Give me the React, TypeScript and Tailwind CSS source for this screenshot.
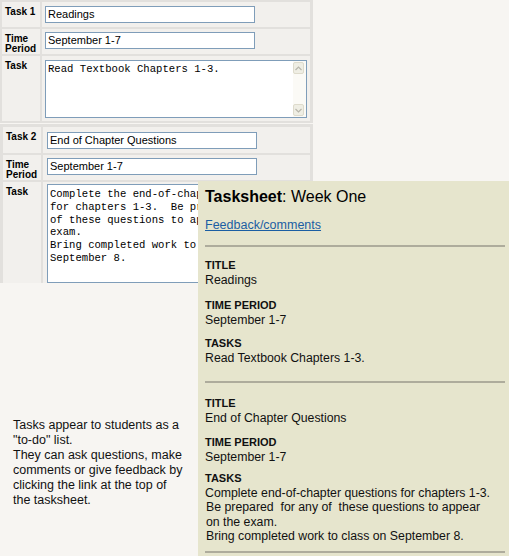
import React from 'react';

const FONT = { fontFamily: '"Liberation Sans", Arial, sans-serif' };

const Field = ({ value }: { value: string }) => (
  <div className="h-[17px] w-[210px] border border-[#7f9db9] bg-white px-[2px] text-[11px] leading-[15px] text-black whitespace-nowrap">
    {value}
  </div>
);

const Label = ({ lines }: { lines: string[] }) => (
  <div className="bg-[#f2f0ed] pl-[3px] pt-[5px] text-[10px] font-bold leading-[10px] text-black">
    {lines.map((l) => (
      <div key={l}>{l}</div>
    ))}
  </div>
);

const Chevron = ({ up }: { up?: boolean }) => (
  <div className="flex h-[12px] w-[11px] items-center justify-center rounded-[2px] border border-[#dedbcc] bg-[#efeee4]">
    <svg width="7" height="5" viewBox="0 0 7 5">
      <path d={up ? 'M0.5 4 L3.5 1 L6.5 4' : 'M0.5 1 L3.5 4 L6.5 1'} fill="none" stroke="#b8b6ab" strokeWidth="1.2" />
    </svg>
  </div>
);

export default function App() {
  return (
    <div className="relative flex h-[556px] w-[509px] flex-col overflow-hidden bg-[#f7f5f2]" style={FONT}>
      {/* Task 1 table */}
      <div className="grid w-[313px] grid-cols-[38px_1fr] gap-[2px] bg-[#e2e0dd] p-[2px] pr-[3px]">
        <Label lines={['Task 1']} />
        <div className="bg-[#f2f0ed] py-[4px] pl-[3px]">
          <Field value="Readings" />
        </div>
        <Label lines={['Time', 'Period']} />
        <div className="bg-[#f2f0ed] pb-[4px] pl-[3px] pt-[3px]">
          <Field value="September 1-7" />
        </div>
        <Label lines={['Task']} />
        <div className="bg-[#f2f0ed] pb-[3px] pl-[3px] pt-[4px]">
          <div className="flex h-[58px] w-[262px] border border-[#7f9db9] bg-white">
            <div className="flex-1 whitespace-pre pl-[2px] pt-[2px] font-['Liberation_Mono'] text-[10.6px] leading-[13px] text-black">
              Read Textbook Chapters 1-3.
            </div>
            <div className="flex w-[13px] flex-col justify-between bg-[#fbfaf6] py-[1px]">
              <Chevron up />
              <Chevron />
            </div>
          </div>
        </div>
      </div>

      {/* Task 2 table */}
      <div className="mt-[1px] grid h-[159px] w-[313px] grid-cols-[38px_1fr] grid-rows-[26px_25px_1fr] gap-[2px] overflow-hidden bg-[#e2e0dd] pl-[3px] pr-[3px] pt-[3px]">
        <Label lines={['Task 2']} />
        <div className="bg-[#f2f0ed] pl-[4px] pt-[5px]">
          <Field value="End of Chapter Questions" />
        </div>
        <Label lines={['Time', 'Period']} />
        <div className="bg-[#f2f0ed] pl-[4px] pt-[3px]">
          <Field value="September 1-7" />
        </div>
        <Label lines={['Task']} />
        <div className="bg-[#f2f0ed] pl-[4px] pt-[2px]">
          <div className="h-[99px] w-[262px] border border-[#7f9db9] bg-white pl-[2px] pt-[3px]">
            {/* only the part left of the overlay is visible */}
            <div className="w-[148px] overflow-hidden whitespace-pre font-['Liberation_Mono'] text-[10.6px] leading-[12.8px] text-black">
              {'Complete the end-of-chapter questions\nfor chapters 1-3.  Be prepared for any\nof these questions to appear on the\nexam.\nBring completed work to class on\nSeptember 8.'}
            </div>
          </div>
        </div>
      </div>

      {/* Note */}
      <div className="mt-[135px] pl-[13px] text-[12.5px] leading-[15px] text-[#111]">
        Tasks appear to students as a
        <br />
        "to-do" list.
        <br />
        They can ask questions, make
        <br />
        comments or give feedback by
        <br />
        clicking the link at the top of
        <br />
        the tasksheet.
      </div>

      {/* Tasksheet preview overlay */}
      <div className="absolute left-[198px] top-[181px] h-[375px] w-[311px] bg-[#e6e5cd] pl-[7px] pr-[4px] pt-[7px] text-[#111]">
        <div className="text-[16px] leading-[18px] text-black">
          <span className="font-bold">Tasksheet</span>: Week One
        </div>
        <a href="#" className="mt-[12px] block text-[12.5px] leading-[14px] text-[#1b5ea3] underline">
          Feedback/comments
        </a>
        <div className="mt-[13px] h-[2px] bg-[#aeac9c]" />

        <div className="mt-[10px] text-[11px] font-bold leading-[16px]">TITLE</div>
        <div className="text-[12.3px] leading-[15px]">Readings</div>
        <div className="mt-[9px] text-[11px] font-bold leading-[16px]">TIME PERIOD</div>
        <div className="text-[12.3px] leading-[15px]">September 1-7</div>
        <div className="mt-[7px] text-[11px] font-bold leading-[16px]">TASKS</div>
        <div className="text-[12.3px] leading-[15px]">Read Textbook Chapters 1-3.</div>
        <div className="mt-[15px] h-[2px] bg-[#aeac9c]" />

        <div className="mt-[12px] text-[11px] font-bold leading-[16px]">TITLE</div>
        <div className="text-[12.3px] leading-[15px]">End of Chapter Questions</div>
        <div className="mt-[8px] text-[11px] font-bold leading-[16px]">TIME PERIOD</div>
        <div className="text-[12.3px] leading-[15px]">September 1-7</div>
        <div className="mt-[5px] text-[11px] font-bold leading-[16px]">TASKS</div>
        <div className="text-[12.3px] leading-[14.3px]">
          Complete end-of-chapter questions for chapters 1-3.
          <br />
          <span className="pl-[1px]">Be prepared&nbsp; for any of&nbsp; these questions to appear</span>
          <br />
          <span className="pl-[1px]">on the exam.</span>
          <br />
          <span className="pl-[1px]">Bring completed work to class on September 8.</span>
        </div>
        <div className="mt-[8px] h-[2px] bg-[#aeac9c]" />
      </div>
    </div>
  );
}
